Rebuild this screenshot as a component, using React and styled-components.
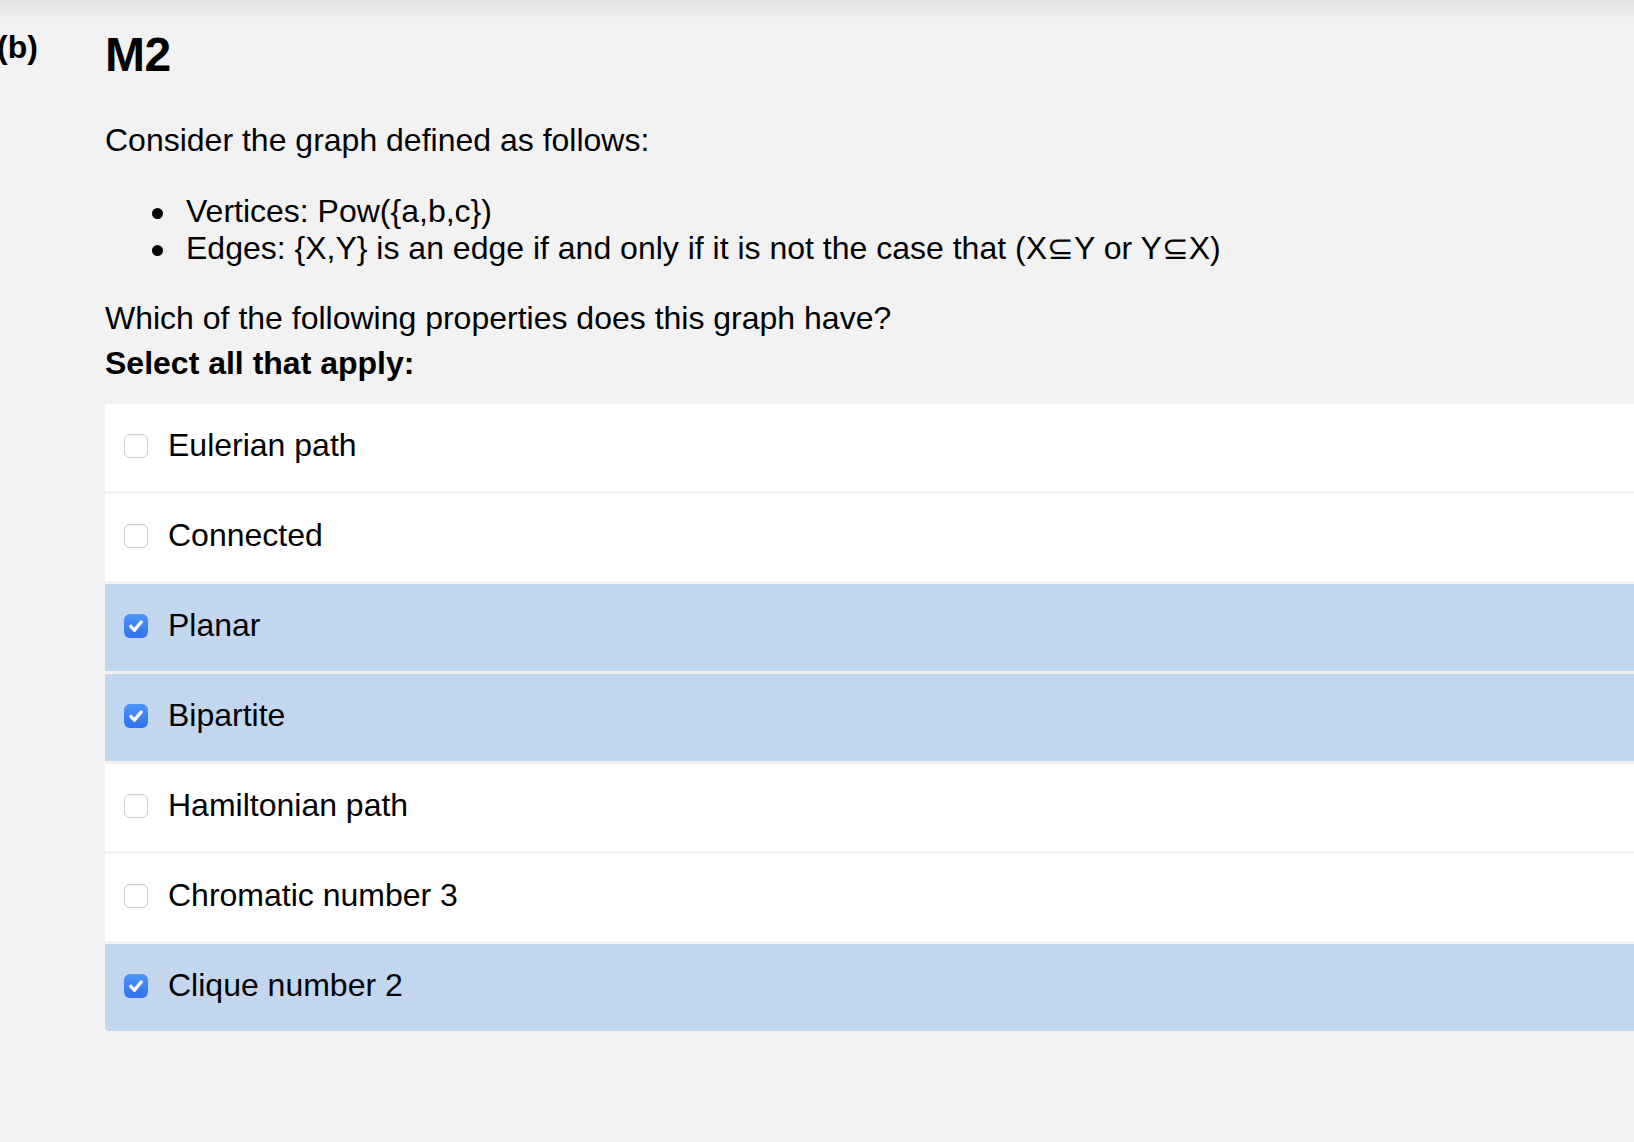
import React from 'react';
import styled, { createGlobalStyle } from 'styled-components';

const GlobalStyle = createGlobalStyle`
  html, body {
    margin: 0;
    padding: 0;
    background: #f2f2f2;
    overflow-x: hidden;
  }
  body {
    font-family: "Liberation Sans", Arial, Helvetica, sans-serif;
    color: #000;
  }
`;

const choices = [
  { label: 'Eulerian path', checked: false },
  { label: 'Connected', checked: false },
  { label: 'Planar', checked: true },
  { label: 'Bipartite', checked: true },
  { label: 'Hamiltonian path', checked: false },
  { label: 'Chromatic number 3', checked: false },
  { label: 'Clique number 2', checked: true },
];

const Page = styled.div`
  display: flex;
  min-height: 1142px;
  box-sizing: border-box;
  background: linear-gradient(#e3e3e3 0px, #efefef 18px, #f2f2f2 36px);
`;

const PartLabel = styled.div`
  width: 108px;
  margin-left: -3px;
  margin-top: 29px;
  flex-shrink: 0;
  font-size: 32px;
  font-weight: bold;
  line-height: 1.15;
`;

const Content = styled.div`
  flex: 1;
  display: flex;
  flex-direction: column;
`;

const Title = styled.h2`
  margin: 27px 0 0;
  font-size: 48px;
  font-weight: bold;
  line-height: 1.15;
  letter-spacing: -0.5px;
`;

const Text = styled.p`
  margin: ${p => p.$top}px 0 0;
  font-size: 32px;
  line-height: 1.15;
  font-weight: ${p => (p.$bold ? 'bold' : 'normal')};
`;

const Bullets = styled.ul`
  list-style: none;
  margin: 34px 0 0;
  padding: 0;
`;

const Bullet = styled.li`
  display: flex;
  align-items: center;
  font-size: 32px;
  line-height: 1.15;

  &::before {
    content: '';
    flex-shrink: 0;
    width: 11px;
    height: 11px;
    margin: 4px 23px 0 47px;
    border-radius: 50%;
    background: #000;
  }
`;

const Options = styled.div`
  margin-top: 22px;
  display: flex;
  flex-direction: column;
  gap: 3px;
  border-radius: 4px 0 0 4px;
  overflow: hidden;
`;

const Option = styled.label`
  display: flex;
  align-items: center;
  gap: 20px;
  height: 87px;
  box-sizing: border-box;
  padding: 0 0 4px 19px;
  background: ${p => (p.$checked ? '#c2d7ee' : '#ffffff')};
  font-size: 32px;
  line-height: 1.15;
`;

const Box = styled.span`
  width: 24px;
  height: 24px;
  flex-shrink: 0;
  box-sizing: border-box;
  border-radius: 6px;
  display: flex;
  align-items: center;
  justify-content: center;
  background: ${p => (p.$checked ? 'linear-gradient(#4f95f8, #2f70ef)' : '#ffffff')};
  border: ${p => (p.$checked ? 'none' : '1px solid #cdcdcd')};
  box-shadow: ${p => (p.$checked ? 'none' : 'inset 0 1px 1px rgba(0,0,0,0.04)')};
`;

const Check = () => (
  <svg width="20" height="20" viewBox="0 0 20 20">
    <path d="M4.8 10.4l3.6 3.8L15.2 6" fill="none" stroke="#fff" strokeWidth="3.4" strokeLinecap="round" strokeLinejoin="round" />
  </svg>
);

export default function App() {
  return (
    <>
      <GlobalStyle />
      <Page>
        <PartLabel>(b)</PartLabel>
        <Content>
          <Title>M2</Title>
          <Text $top={40}>Consider the graph defined as follows:</Text>
          <Bullets>
            <Bullet>Vertices: Pow({'{'}a,b,c{'}'})</Bullet>
            <Bullet>Edges: {'{'}X,Y{'}'} is an edge if and only if it is not the case that (X⊆Y or Y⊆X)</Bullet>
          </Bullets>
          <Text $top={33}>Which of the following properties does this graph have?</Text>
          <Text $top={9} $bold>Select all that apply:</Text>
          <Options>
            {choices.map(c => (
              <Option key={c.label} $checked={c.checked}>
                <Box $checked={c.checked}>{c.checked && <Check />}</Box>
                {c.label}
              </Option>
            ))}
          </Options>
        </Content>
      </Page>
    </>
  );
}
